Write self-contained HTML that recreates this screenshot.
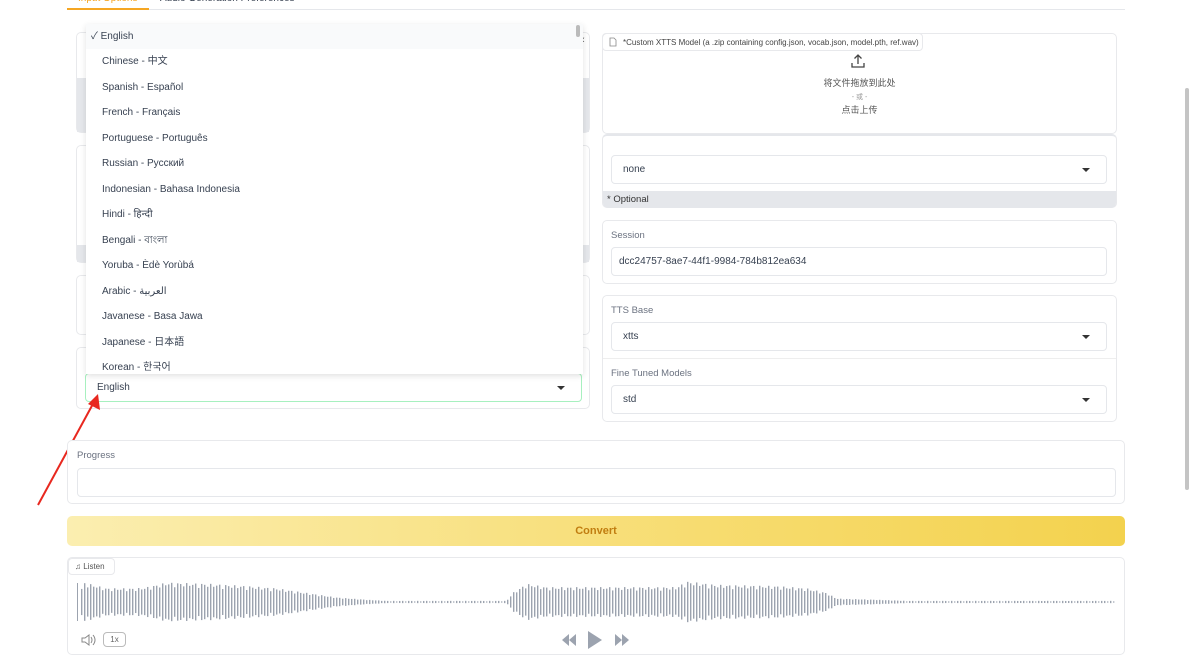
<!DOCTYPE html>
<html><head><meta charset="utf-8">
<style>
*{box-sizing:border-box;margin:0;padding:0}
body{width:1192px;height:658px;overflow:hidden;background:#fff;font-family:"Liberation Sans","Noto Sans CJK SC",sans-serif;color:#374151;position:relative;font-size:10px}
.abs{position:absolute}
.panel{position:absolute;border:1px solid #e8e9ec;border-radius:5px;background:#fff}
.sel{position:absolute;border:1px solid #e5e7eb;border-radius:4px;background:#fff;font-size:10px;color:#374151;padding-left:11px;display:flex;align-items:center}
.sel .ar{position:absolute;right:16px;top:50%;margin-top:-2px;width:0;height:0;border-left:4px solid transparent;border-right:4px solid transparent;border-top:4px solid #333}
.lbl{position:absolute;font-size:9.5px;color:#6b7280}
.dd{position:absolute;left:86px;top:24px;width:497px;height:350px;background:#fff;box-shadow:0 2px 6px rgba(0,0,0,.12);overflow:hidden;font-size:10px;color:#374151}
.dd div{position:absolute;left:16px;height:14px;line-height:14px;overflow:visible;white-space:nowrap}
</style></head><body>
<div class="abs" style="left:67px;top:9px;width:1058px;height:1px;background:#e5e7eb"></div>
<div class="abs" style="left:67px;top:8px;width:82px;height:2px;background:#f5a623"></div>
<div class="abs" style="left:160px;top:-7px;font-size:10px;color:#374151">Audio Generation Preferences</div>
<div class="abs" style="left:78px;top:-7px;font-size:10px;color:#f5a623">Input Options</div>

<div class="panel" style="left:76px;top:32px;width:514px;height:101px"></div>
<div class="abs" style="left:77px;top:78px;width:512px;height:54px;background:#e5e7eb"></div>
<div class="abs" style="left:581px;top:34px;font-size:11px;color:#555">‹</div>
<div class="panel" style="left:76px;top:145px;width:514px;height:118px"></div>
<div class="abs" style="left:77px;top:245px;width:512px;height:17px;background:#e5e7eb"></div>
<div class="panel" style="left:76px;top:275px;width:514px;height:60px"></div>
<div class="panel" style="left:76px;top:347px;width:514px;height:62px"></div>
<div class="sel" style="left:85px;top:373px;width:497px;height:29px;border-color:#a7f0bf">English<span class="ar"></span></div>

<div class="dd">
<div style="top:0;left:0;width:497px;height:25px;background:#f9fafb"></div>
<div style="top:6px;left:5px">✓ English</div>
<div style="top:31px">Chinese - 中文</div>
<div style="top:57px">Spanish - Español</div>
<div style="top:82px">French - Français</div>
<div style="top:108px">Portuguese - Português</div>
<div style="top:133px">Russian - Русский</div>
<div style="top:159px">Indonesian - Bahasa Indonesia</div>
<div style="top:184px">Hindi - हिन्दी</div>
<div style="top:210px">Bengali - বাংলা</div>
<div style="top:235px">Yoruba - Èdè Yorùbá</div>
<div style="top:261px">Arabic - العربية</div>
<div style="top:286px">Javanese - Basa Jawa</div>
<div style="top:312px">Japanese - 日本語</div>
<div style="top:337px">Korean - 한국어</div>
<div style="top:1px;left:490px;width:4px;height:12px;border-radius:2px;background:#bbb"></div>
</div>

<svg class="abs" style="left:30px;top:390px" width="80" height="120"><line x1="8" y1="115" x2="64" y2="12" stroke="#e8281f" stroke-width="2"/><polygon points="68,4 70,20 58,14" fill="#e8281f"/></svg>

<div class="panel" style="left:602px;top:33px;width:515px;height:101px"></div>
<div class="abs" style="left:602px;top:33px;width:321px;height:18px;border:1px solid #e8e9ec;border-radius:4px;font-size:8px;padding:4px 0 0 20px;color:#444">*Custom XTTS Model (a .zip containing config.json, vocab.json, model.pth, ref.wav)</div>
<svg class="abs" style="left:609px;top:37px" width="8" height="10"><path d="M1 1h4l2 2v6H1z" fill="none" stroke="#888" stroke-width=".8"/></svg>
<svg class="abs" style="left:850px;top:53px" width="16" height="16"><path d="M8 11V2M4.5 5.5L8 2l3.5 3.5M2 10v4h12v-4" fill="none" stroke="#444" stroke-width="1.3"/></svg>
<div class="abs" style="left:602px;top:77px;width:515px;text-align:center;font-size:9px;color:#555;line-height:13px">将文件拖放到此处<br><span style="font-size:7px;color:#999">- 或 -</span><br>点击上传</div>
<div class="panel" style="left:602px;top:134px;width:515px;height:74px;border-top:2px solid #e5e7eb"></div>
<div class="sel" style="left:611px;top:155px;width:496px;height:29px">none<span class="ar"></span></div>
<div class="abs" style="left:603px;top:191px;width:513px;height:17px;background:#e5e7eb;border-radius:0 0 5px 5px;font-size:9.5px;color:#333;padding:3px 0 0 4px">* Optional</div>

<div class="panel" style="left:602px;top:220px;width:515px;height:64px"></div>
<div class="lbl" style="left:611px;top:230px">Session</div>
<div class="sel" style="left:611px;top:247px;width:496px;height:29px;padding-left:7px">dcc24757-8ae7-44f1-9984-784b812ea634</div>

<div class="panel" style="left:602px;top:295px;width:515px;height:127px"></div>
<div class="abs" style="left:603px;top:358px;width:513px;height:1px;background:#eee"></div>
<div class="lbl" style="left:611px;top:305px">TTS Base</div>
<div class="sel" style="left:611px;top:322px;width:496px;height:29px">xtts<span class="ar"></span></div>
<div class="lbl" style="left:611px;top:368px">Fine Tuned Models</div>
<div class="sel" style="left:611px;top:385px;width:496px;height:29px">std<span class="ar"></span></div>

<div class="panel" style="left:67px;top:440px;width:1058px;height:64px"></div>
<div class="lbl" style="left:77px;top:450px">Progress</div>
<div class="sel" style="left:77px;top:468px;width:1039px;height:29px"></div>

<div class="abs" style="left:67px;top:516px;width:1058px;height:30px;border-radius:5px;background:linear-gradient(90deg,#fbeeb0,#f7dc70 60%,#f3d24e);color:#c17d10;font-size:11px;font-weight:bold;text-align:center;line-height:30px">Convert</div>

<div class="panel" style="left:67px;top:557px;width:1058px;height:98px"></div>
<div class="abs" style="left:68px;top:558px;width:47px;height:17px;border:1px solid #e8e9ec;border-radius:4px;font-size:8px;color:#555;padding:3px 0 0 6px">♫ Listen</div>
<svg id="wf" class="abs" style="left:76px;top:580px" width="1040" height="45"></svg>
<svg class="abs" style="left:80px;top:633px" width="16" height="14"><path d="M2 5h3l4-3v10l-4-3H2z M11 4q2 3 0 6 M13 2q4 5 0 10" fill="none" stroke="#888" stroke-width="1"/></svg>
<div class="abs" style="left:103px;top:632px;width:23px;height:15px;border:1px solid #bbb;border-radius:4px;font-size:8px;color:#666;text-align:center;line-height:13px">1x</div>
<svg class="abs" style="left:560px;top:630px" width="72" height="20"><path d="M2 10l7-6v12z M9 10l7-6v12z" fill="#9ca3af"/><path d="M28 1l14 9-14 9z" fill="#9ca3af"/><path d="M55 4l7 6-7 6z M62 4l7 6-7 6z" fill="#9ca3af"/></svg>

<div class="abs" style="left:1185px;top:88px;width:4px;height:402px;background:#c4c4c4;border-radius:2px"></div>

<script>
var s=document.getElementById('wf'),h='',c=22;
function amp(x){
 var segs=[[5,12],[8,17],[30,12],[60,12],[70,13],[90,17],[130,16],[170,14],[200,12],[230,8],[260,4],[290,2],[310,1],[430,1],[436,8],[450,16],[470,13],[520,13],[600,13],[610,18],[640,15],[700,14],[730,12],[750,8],[760,3],[800,2],[830,1],[1040,1]];
 for(var i=0;i<segs.length-1;i++){if(x>=segs[i][0]&&x<=segs[i+1][0]){var t=(x-segs[i][0])/(segs[i+1][0]-segs[i][0]);return segs[i][1]+(segs[i+1][1]-segs[i][1])*t;}}return 1;}
for(var x=5;x<1038;x+=3){var a=amp(x)*(0.85+0.3*Math.abs(Math.sin(x*1.7)));if(a<1)a=0.6;h+='<rect x="'+x+'" y="'+(c-a)+'" width="1.4" height="'+(2*a)+'" fill="#9ca3af"/>';}
h+='<rect x="1" y="3" width="1" height="38" fill="#9ca3af"/>';
s.innerHTML=h;
</script>
</body></html>
